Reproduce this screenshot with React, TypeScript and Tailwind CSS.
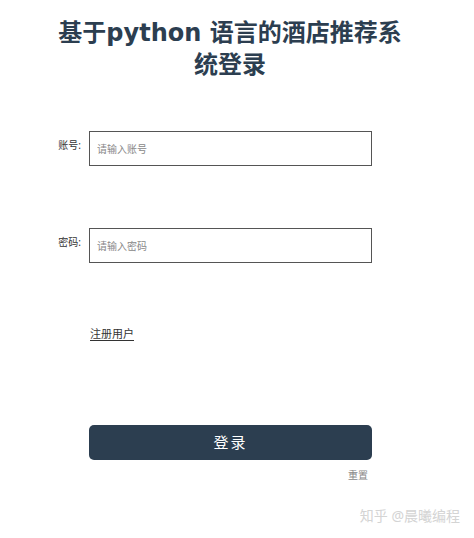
export default function App() {
  return (
    <div
      className="relative w-[474px] h-[538px] bg-white overflow-hidden"
      style={{ fontFamily: '"Noto Sans", "Noto Sans CJK SC", sans-serif' }}
    >
      <h1
        className="ml-[30px] w-[400px] pt-[17px] text-center text-[24px] font-bold leading-[32px] text-[#2c3e50]"
        style={{ fontFamily: '"DejaVu Sans", "Noto Sans CJK SC", sans-serif' }}
      >
        基于python 语言的酒店推荐系
        <br />
        统登录
      </h1>

      <div className="mt-[50px] flex items-start">
        <label className="w-[89px] pr-[8px] pt-[7px] text-right text-[10px] text-[#333]">账号:</label>
        <input
          className="w-[283px] h-[35px] border border-[#555] px-[7px] text-[10px] text-[#333] placeholder:text-[#888] outline-none"
          placeholder="请输入账号"
        />
      </div>

      <div className="mt-[62px] flex items-start">
        <label className="w-[89px] pr-[8px] pt-[7px] text-right text-[10px] text-[#333]">密码:</label>
        <input
          type="text"
          className="w-[283px] h-[35px] border border-[#555] px-[7px] text-[10px] text-[#333] placeholder:text-[#888] outline-none"
          placeholder="请输入密码"
        />
      </div>

      <div className="mt-[63px] ml-[90px] text-[11px] leading-[16px] text-[#333]">
        <a className="underline underline-offset-2">注册用户</a>
      </div>

      <button className="mt-[83px] ml-[89px] flex h-[35px] w-[283px] items-center justify-center rounded-[5px] bg-[#2c3e50] text-[15px] tracking-[2px] text-white">
        登录
      </button>

      <div className="mt-[8px] ml-[348px] text-[10px] leading-[14px] text-[#888]">重置</div>

      <div className="absolute right-[14px] bottom-[12px] text-[14px] text-[#d4d4d4]">知乎 @晨曦编程</div>
    </div>
  )
}
